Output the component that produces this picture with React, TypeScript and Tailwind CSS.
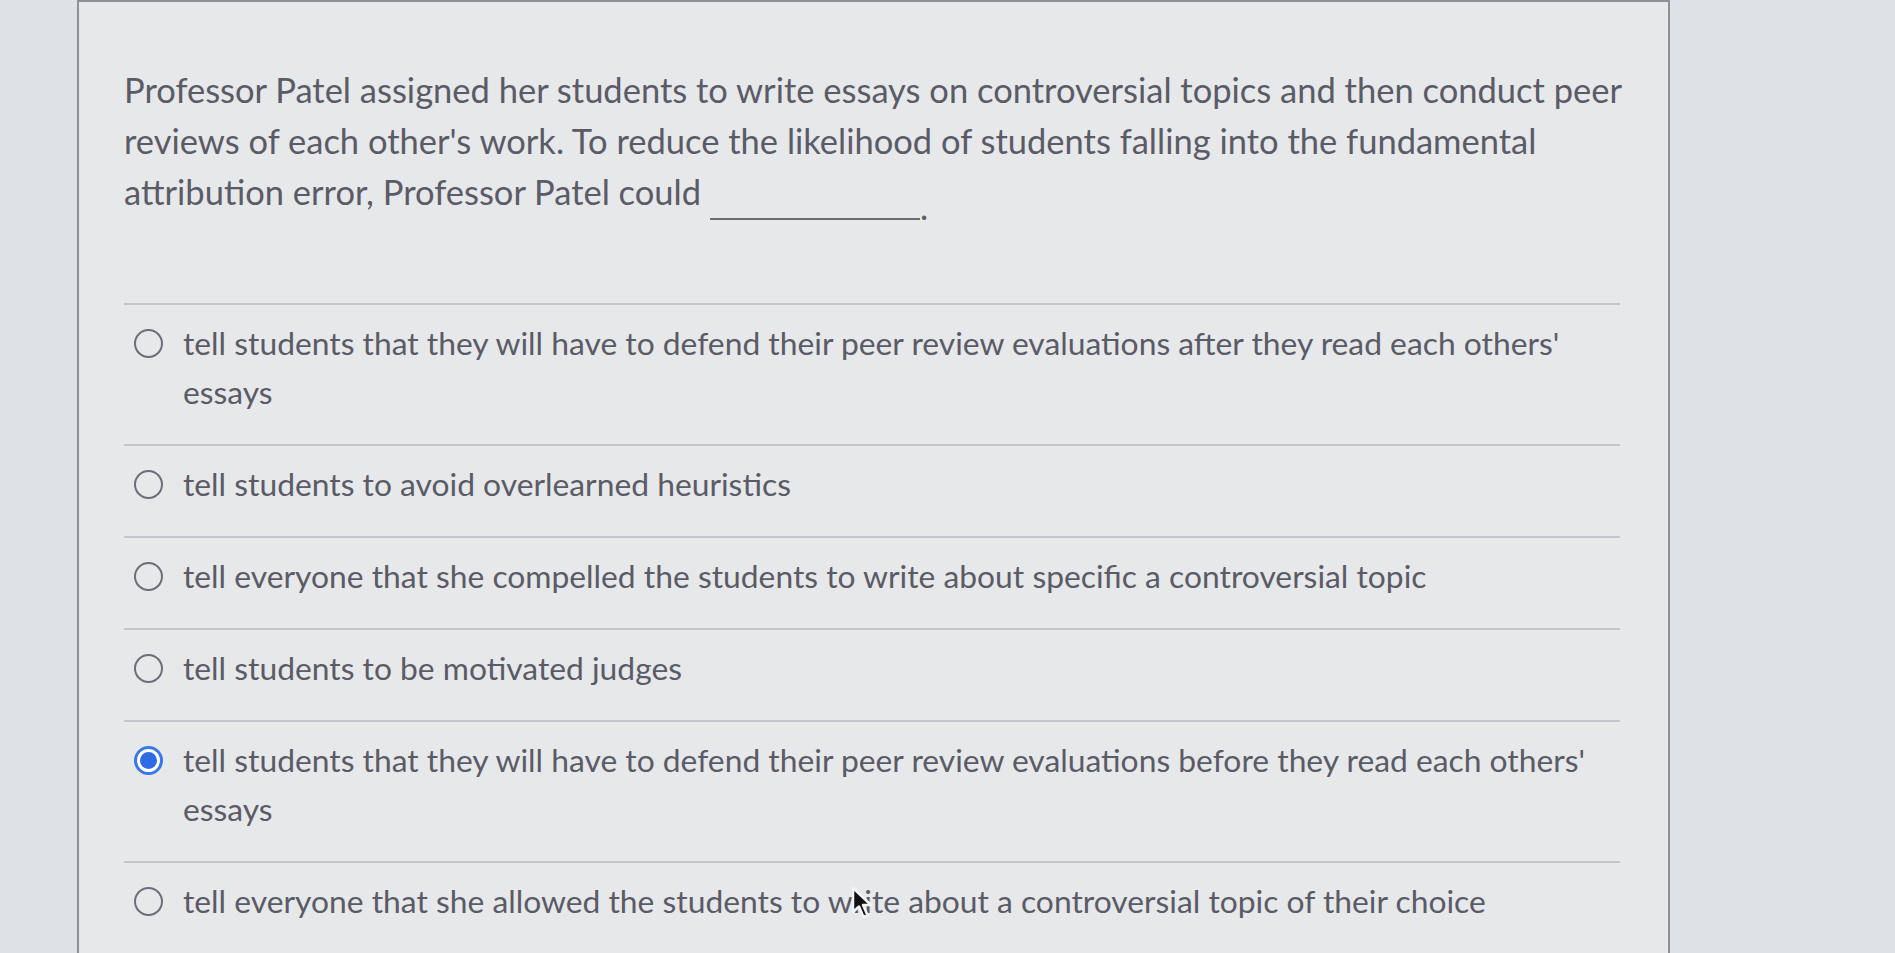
import React from "react";

type Opt = { lines: string[]; selected: boolean };

const options: Opt[] = [
  {
    lines: [
      "tell students that they will have to defend their peer review evaluations after they read each others'",
      "essays",
    ],
    selected: false,
  },
  { lines: ["tell students to avoid overlearned heuristics"], selected: false },
  {
    lines: ["tell everyone that she compelled the students to write about specific a controversial topic"],
    selected: false,
  },
  { lines: ["tell students to be motivated judges"], selected: false },
  {
    lines: [
      "tell students that they will have to defend their peer review evaluations before they read each others'",
      "essays",
    ],
    selected: true,
  },
  {
    lines: ["tell everyone that she allowed the students to write about a controversial topic of their choice"],
    selected: false,
  },
];

function Radio({ selected }: { selected: boolean }) {
  if (selected) {
    return (
      <div className="w-[29px] h-[29px] rounded-full border-[3px] border-[#3b77e6] bg-white flex items-center justify-center">
        <div className="w-[17px] h-[17px] rounded-full bg-[#2e6be4]" />
      </div>
    );
  }
  return <div className="w-[29px] h-[29px] rounded-full border-2 border-[#6c6e78]" />;
}

function Cursor() {
  return (
    <svg width="24" height="34" viewBox="0 0 24 34" className="absolute left-[727px] top-[23px]">
      <path
        d="M2 2 L2 26 L8 20.5 L12.5 31 L16.5 29.2 L12 19 L20 19 Z"
        fill="#111"
        stroke="#f4f4f4"
        strokeWidth="2.5"
        strokeLinejoin="round"
      />
    </svg>
  );
}

export default function App() {
  return (
    <div className="w-[1895px] h-[953px] overflow-hidden bg-[#dee1e5] font-[Lato,'Liberation_Sans',sans-serif] text-[#5a5b66]">
      <div className="ml-[77px] w-[1593px] h-full border-x-2 border-t-2 border-[#8d9099] bg-[#e7e8ea] pl-[45px] pr-[48px] pt-[62px]">
        <p className="text-[34.5px] leading-[51px] whitespace-nowrap">
          Professor Patel assigned her students to write essays on controversial topics and then conduct peer
          <br />
          reviews of each other's work. To reduce the likelihood of students falling into the fundamental
          <br />
          attribution error, Professor Patel could{" "}
          <span className="relative top-[15px]">
            <span className="inline-block w-[210px] h-[2px] bg-[#6a6b75]" />.
          </span>
        </p>
        <div className="mt-[86px] h-[2px] bg-[#c4c5ca]" />
        {options.map((o, i) => (
          <div key={i} className="relative">
            <div className="flex pt-[14px] pb-[27px]">
              <div className="ml-[10px] h-[49px] flex items-center shrink-0">
                <Radio selected={o.selected} />
              </div>
              <div className="ml-[20px] text-[31.8px] leading-[49px] whitespace-nowrap">
                {o.lines.map((l, j) => (
                  <div key={j}>{l}</div>
                ))}
              </div>
            </div>
            {i < options.length - 1 && <div className="h-[2px] bg-[#c4c5ca]" />}
            {i === options.length - 1 && <Cursor />}
          </div>
        ))}
      </div>
    </div>
  );
}
